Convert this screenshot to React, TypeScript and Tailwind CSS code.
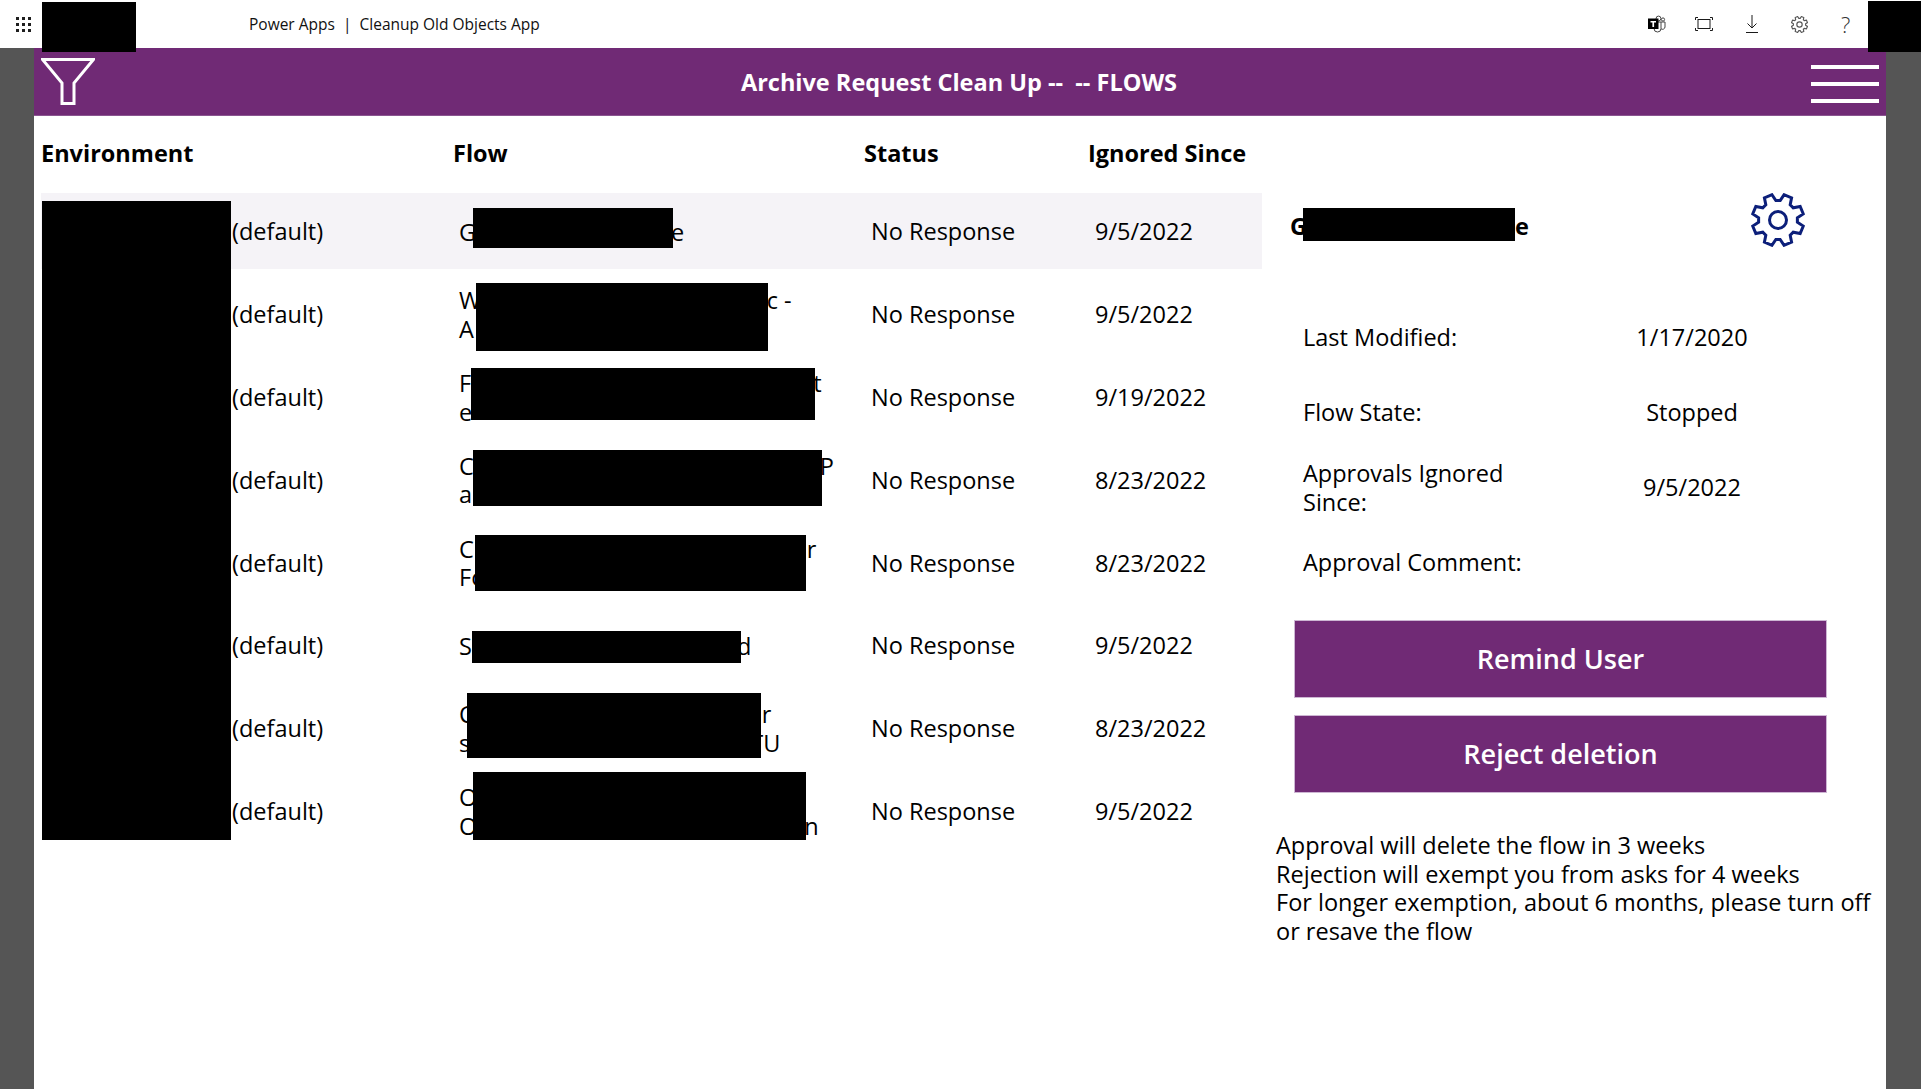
function gearPath(cx: number, cy: number, rOuter: number, rInner: number, teeth: number) {
    const pts: string[] = [];
    const step = (Math.PI * 2) / teeth;
    for (let i = 0; i < teeth; i++) {
        const a = -Math.PI / 2 + step / 2 + i * step;
        const offs: [number, number][] = [
            [-0.36, rInner],
            [-0.2, rOuter],
            [0.2, rOuter],
            [0.36, rInner],
        ];
        for (const [o, r] of offs) {
            const t = a + o * step;
            pts.push(`${(cx + Math.cos(t) * r).toFixed(2)},${(cy + Math.sin(t) * r).toFixed(2)}`);
        }
    }
    return "M" + pts.join("L") + "Z";
}

function Gear({ className, color, width }: { className: string; color: string; width: number }) {
    return (
        <svg viewBox="0 0 54 54" className={className} fill="none" stroke={color} strokeWidth={width} strokeLinejoin="miter">
            <path d={gearPath(27, 27, 26, 19.5, 8)} />
            <circle cx="27" cy="27" r="8.5" />
        </svg>
    );
}

function AppGrid() {
    return (
        <div className="grid grid-cols-3 gap-[3px] w-[15px]">
            {Array.from({ length: 9 }).map((_, i) => (
                <div key={i} className="w-[3px] h-[3px] bg-[#1f1f1f]" />
            ))}
        </div>
    );
}

function TopIcons() {
    return (
        <div className="flex items-center">
            <svg viewBox="0 0 18 18" className="w-[18px] h-[18px]" fill="none">
                <circle cx="10.5" cy="3.5" r="2.4" stroke="#444" strokeWidth="1" />
                <circle cx="15" cy="4.5" r="1.6" stroke="#444" strokeWidth="1" />
                <path d="M6 7h7v6.5a3.5 3.5 0 0 1-7 0z" stroke="#444" strokeWidth="1" />
                <path d="M13 7h4v5a2.5 2.5 0 0 1-4 1.8" stroke="#444" strokeWidth="1" />
                <rect x="0" y="3.5" width="10.5" height="10.5" fill="#000" />
                <path d="M2.5 6h5.5v1.6H6.1V12H4.4V7.6H2.5z" fill="#fff" />
            </svg>
            <svg viewBox="0 0 18 14" className="w-[18px] h-[14px] ml-[29px]" fill="none" stroke="#1a1a1a" strokeWidth="1">
                <rect x="3" y="2.5" width="12" height="9" />
                <path d="M3 .5H.5V3M15 .5h2.5V3M3 13.5H.5V11M15 13.5h2.5V11" />
            </svg>
            <svg viewBox="0 0 14 20" className="w-[14px] h-[20px] ml-[32px]" fill="none" stroke="#1a1a1a" strokeWidth="1">
                <path d="M7 1v13M2.5 9.5 7 14l4.5-4.5M1 18.5h12" />
            </svg>
            <Gear className="w-[17px] h-[17px] ml-[32px]" color="#555" width={3.6} />
            <span className="ml-[33px] w-[12px] text-[22px] leading-none font-light text-[#333]">?</span>
        </div>
    );
}

type FlowLine = { start: string; spacer: string; end?: string };
type Row = {
    lines: FlowLine[];
    box: string;
    date: string;
    active?: boolean;
};

const rows: Row[] = [
    {
        lines: [{ start: "G", spacer: "w-[195px]", end: "e" }],
        box: "left-[13px] top-[15px] w-[200px] h-[40px]",
        date: "9/5/2022",
        active: true,
    },
    {
        lines: [
            { start: "W", spacer: "w-[286px]", end: "c -" },
            { start: "A", spacer: "w-0" },
        ],
        box: "left-[16px] top-[7px] w-[292px] h-[68px]",
        date: "9/5/2022",
    },
    {
        lines: [
            { start: "F", spacer: "w-[342px]", end: "t" },
            { start: "e", spacer: "w-0" },
        ],
        box: "left-[11px] top-[9px] w-[344px] h-[52px]",
        date: "9/19/2022",
    },
    {
        lines: [
            { start: "C", spacer: "w-[346px]", end: "P" },
            { start: "a", spacer: "w-0" },
        ],
        box: "left-[13px] top-[9px] w-[349px] h-[56px]",
        date: "8/23/2022",
    },
    {
        lines: [
            { start: "C", spacer: "w-[333px]", end: "r" },
            { start: "Fo", spacer: "w-0" },
        ],
        box: "left-[15px] top-[11px] w-[331px] h-[56px]",
        date: "8/23/2022",
    },
    {
        lines: [{ start: "S", spacer: "w-[265px]", end: "d" }],
        box: "left-[12px] top-[24px] w-[269px] h-[32px]",
        date: "9/5/2022",
    },
    {
        lines: [
            { start: "C", spacer: "w-[288px]", end: "r" },
            { start: "s", spacer: "w-[280px]", end: "TU" },
        ],
        box: "left-[7px] top-[3px] w-[294px] h-[65px]",
        date: "8/23/2022",
    },
    {
        lines: [
            { start: "O", spacer: "w-0" },
            { start: "O", spacer: "w-[327px]", end: "n" },
        ],
        box: "left-[13px] top-[-1px] w-[333px] h-[68px]",
        date: "9/5/2022",
    },
];

function FlowRow({ row }: { row: Row }) {
    return (
        <div className={`flex items-center h-[76px] mb-[6.8px] ${row.active ? "bg-[#f5f3f7]" : ""}`}>
            <div className="w-[419px] pl-[191px] mt-[2px]">(default)</div>
            <div className="relative w-[411px] h-full pt-[2px] flex flex-col justify-center">
                {row.lines.map((line, i) => (
                    <div key={i} className="flex -ml-px leading-[28.5px]">
                        <span>{line.start}</span>
                        <span className={`shrink-0 ${line.spacer}`} />
                        {line.end && <span>{line.end}</span>}
                    </div>
                ))}
                <div className={`absolute bg-black ${row.box}`} />
            </div>
            <div className="w-[224px] mt-[2px]">No Response</div>
            <div className="mt-[2px]">{row.date}</div>
        </div>
    );
}

function Field({ label, value }: { label: string; value?: string }) {
    return (
        <div className="flex items-center h-[75px] pl-[41px]">
            <div className="w-[240px] leading-[28.5px]">{label}</div>
            <div className="w-[198px] ml-[50px] text-center">{value}</div>
        </div>
    );
}

export default function App() {
    return (
        <div className="relative h-[1089px] overflow-hidden bg-white font-['Open_Sans',sans-serif] text-[23.5px] text-black">
            <header className="flex items-center h-12 bg-white">
                <div className="pl-4 w-[249px]">
                    <AppGrid />
                </div>
                <div className="pt-[2px] text-[15.5px] font-medium text-[#111]">Power Apps&nbsp; |&nbsp; Cleanup Old Objects App</div>
                <div className="ml-auto pr-[68px]">
                    <TopIcons />
                </div>
            </header>
            <div className="absolute left-[42px] top-[2px] w-[94px] h-[50px] bg-black" />
            <div className="absolute left-[1868px] top-[1px] w-[53px] h-[51px] bg-black" />

            <div className="flex h-[1041px] bg-[#555555]">
                <div className="w-[34px]" />
                <div className="w-[1852px] bg-white">
                    <div className="flex items-center h-[68px] bg-[#702a75] border-b border-[#8a5590] pl-[7px] pr-[7px]">
                        <svg viewBox="0 0 54 47" className="w-[54px] h-[47px]" fill="none" stroke="#fff" strokeWidth="3">
                            <path d="M1.5 1.5h51L33 25v20.5H21V25z" />
                        </svg>
                        <div className="flex-1 pl-[12px] pt-[2px] text-center font-bold text-white">Archive Request Clean Up --&nbsp; -- FLOWS</div>
                        <div className="flex flex-col gap-[13px] w-[68px] mt-[4px]">
                            <div className="h-1 bg-white" />
                            <div className="h-1 bg-white" />
                            <div className="h-1 bg-white" />
                        </div>
                    </div>

                    <div className="flex">
                        <div className="w-[1221px] ml-[7px] shrink-0">
                            <div className="flex items-center h-[77px] pb-[1px] font-bold">
                                <div className="w-[412px]">Environment</div>
                                <div className="w-[411px]">Flow</div>
                                <div className="w-[224px]">Status</div>
                                <div>Ignored Since</div>
                            </div>
                            <div className="relative">
                                {rows.map((row, i) => (
                                    <FlowRow key={i} row={row} />
                                ))}
                                <div className="absolute left-[1px] top-[8px] w-[189px] h-[639px] bg-black" />
                            </div>
                        </div>

                        <div className="w-[624px] pt-[77px]">
                            <div className="flex items-center justify-between h-[54px] pl-[28px] pr-[81px]">
                                <div className="relative flex mt-[14px] font-bold">
                                    <span>G</span>
                                    <span className="w-[208px]" />
                                    <span>e</span>
                                    <div className="absolute left-[13px] top-[-1px] w-[212px] h-[33px] bg-black" />
                                </div>
                                <Gear className="w-[54px] h-[54px]" color="#0c1f7a" width={3} />
                            </div>
                            <div className="mt-[53px]">
                                <Field label="Last Modified:" value="1/17/2020" />
                                <Field label="Flow State:" value="Stopped" />
                                <Field label="Approvals Ignored Since:" value="9/5/2022" />
                                <Field label="Approval Comment:" />
                            </div>
                            <div className="flex flex-col gap-[17px] mt-[20px] ml-[32px] w-[533px]">
                                <button className="h-[78px] bg-[#702a75] border border-[#cdb6d3] text-white text-[27px] font-semibold">Remind User</button>
                                <button className="h-[78px] bg-[#702a75] border border-[#cdb6d3] text-white text-[27px] font-semibold">Reject deletion</button>
                            </div>
                            <div className="mt-[38px] ml-[14px] leading-[28.5px]">
                                Approval will delete the flow in 3 weeks
                                <br />
                                Rejection will exempt you from asks for 4 weeks
                                <br />
                                For longer exemption, about 6 months, please turn off
                                <br />
                                or resave the flow
                            </div>
                        </div>
                    </div>
                </div>
                <div className="w-[35px]" />
            </div>
        </div>
    );
}
